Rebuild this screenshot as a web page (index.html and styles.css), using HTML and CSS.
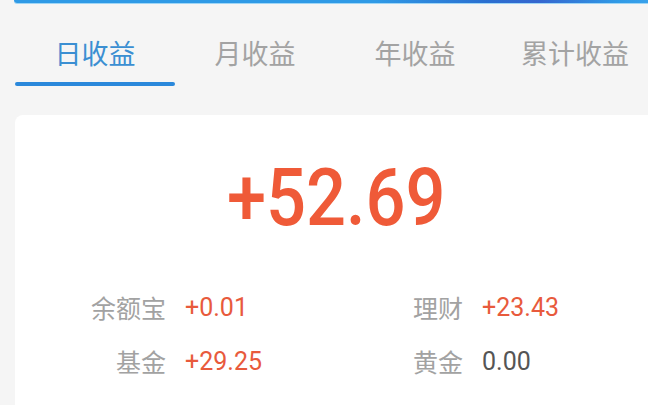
FILE: index.html
```html
<!DOCTYPE html>
<html lang="zh-CN">
<head>
<meta charset="utf-8">
<link rel="stylesheet" href="styles.css">
</head>
<body>
<div class="page">
  <div class="topbar"></div>
  <nav class="tabs">
    <div class="tab active"><span class="tab-label">日收益</span><span class="tab-line"></span></div>
    <div class="tab"><span class="tab-label">月收益</span><span class="tab-line"></span></div>
    <div class="tab"><span class="tab-label">年收益</span><span class="tab-line"></span></div>
    <div class="tab"><span class="tab-label">累计收益</span><span class="tab-line"></span></div>
  </nav>
  <section class="card">
    <div class="total"><span class="total-num">+52.69</span></div>
    <div class="items">
      <div class="item"><span class="label">余额宝</span><span class="value up">+0.01</span></div>
      <div class="item"><span class="label">理财</span><span class="value up">+23.43</span></div>
      <div class="item"><span class="label">基金</span><span class="value up">+29.25</span></div>
      <div class="item"><span class="label">黄金</span><span class="value">0.00</span></div>
    </div>
  </section>
</div>
</body>
</html>
```

FILE: styles.css
```css
html, body {
  margin: 0;
  padding: 0;
  background: #f5f5f5;
  overflow: hidden;
}
body {
  width: 648px;
  height: 405px;
  font-family: "Noto Sans CJK SC", "Noto Sans", sans-serif;
}
.page {
  width: 670px;
}
.topbar {
  height: 3px;
  margin-left: 14px;
  border-bottom-left-radius: 6px;
  background: linear-gradient(to right, #2f9ae6 0%, #2f9ae6 55%, #2a6fd0 72%, #3566cf 80%, #2f9ae6 92%, #3fa6ee 100%);
  box-shadow: 0 1px 0 #9fd6f6;
}
.tabs {
  display: flex;
  margin: 0 15px;
}
.tab {
  width: 160px;
  display: flex;
  flex-direction: column;
  align-items: center;
}
.tab-label {
  padding-top: 32px;
  font-size: 27px;
  line-height: 36px;
  color: #a3a3a3;
  height: 36px;
}
.tab-line {
  align-self: stretch;
  height: 4px;
  margin-top: 11px;
  border-radius: 2px;
}
.tab.active .tab-label {
  color: #3b8fd2;
}
.tab.active .tab-line {
  background: #2a88db;
}
.card {
  margin: 29px 15px 0 15px;
  background: #ffffff;
  border-radius: 8px;
  padding: 43px 0 40px 0;
}
.total {
  text-align: center;
  height: 80px;
  padding-left: 3px;
}
.total-num {
  display: inline-block;
  font-family: Roboto, "Liberation Sans", sans-serif;
  font-weight: 500;
  font-size: 80px;
  line-height: 80px;
  color: #ef5a38;
  transform: scaleX(0.88);
}
.items {
  display: grid;
  grid-template-columns: 297px 1fr;
  row-gap: 18px;
  padding-left: 71px;
  margin-top: 51px;
}
.item {
  display: flex;
  align-items: center;
  gap: 19px;
  height: 36px;
}
.label {
  width: 80px;
  text-align: right;
  font-size: 25px;
  color: #a2a2a2;
}
.value {
  font-family: Roboto, "Liberation Sans", sans-serif;
  font-size: 25px;
  color: #555555;
}
.value.up {
  color: #e85a3c;
}
```
